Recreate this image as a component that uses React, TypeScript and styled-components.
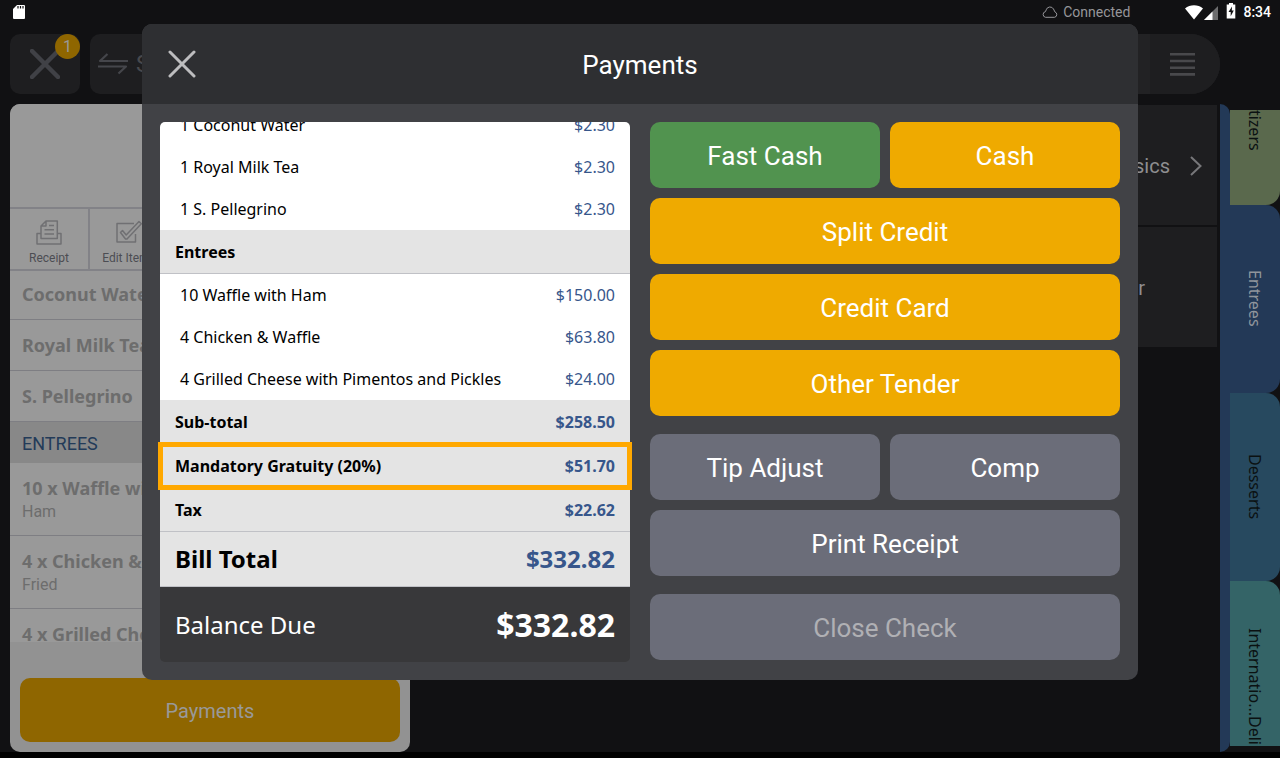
import React from "react";
import styled, { createGlobalStyle } from "styled-components";

const sans = `"Noto Sans", "Open Sans", sans-serif`;
const roboto = `Roboto, "Noto Sans", sans-serif`;

const GlobalStyle = createGlobalStyle`
  * { box-sizing: border-box; }
  body { margin: 0; background: #000; font-family: ${roboto}; }
  button { border: 0; padding: 0; background: none; color: inherit; font: inherit; cursor: pointer; }
  h1, h2, ul { margin: 0; padding: 0; font: inherit; list-style: none; }
`;

const Screen = styled.div`
  position: relative;
  display: flex;
  flex-direction: column;
  height: 100vh;
  min-height: 700px;
  overflow: hidden;
  background: #111113;
  border-bottom: 6px solid #000;
`;

const StatusBar = styled.header`
  display: flex;
  align-items: center;
  height: 24px;
  padding: 0 9px 0 12px;
  color: #fff;
`;

const Connection = styled.span`
  display: flex;
  align-items: center;
  gap: 5px;
  margin-left: auto;
  margin-right: 55px;
  color: #96969a;
  font-size: 14px;
`;

const SystemIcons = styled.span`
  display: flex;
  align-items: center;
  font-size: 14px;
  font-weight: 500;
`;

const Clock = styled.time`
  margin-left: 7px;
`;

const Toolbar = styled.nav`
  display: flex;
  gap: 10px;
  padding: 10px 60px 10px 10px;
`;

const ToolButton = styled.button<{ $grow?: boolean }>`
  position: relative;
  display: flex;
  align-items: center;
  justify-content: ${(p) => (p.$grow ? "flex-start" : "center")};
  gap: 8px;
  flex: ${(p) => (p.$grow ? "0 0 200px" : "0 0 70px")};
  height: 60px;
  padding-left: ${(p) => (p.$grow ? "8px" : "0")};
  border-radius: 10px;
  background: #1e1e20;
  color: #48494d;
  font-size: 24px;
`;

const Badge = styled.span`
  position: absolute;
  top: 0;
  right: 0;
  width: 25px;
  height: 25px;
  border-radius: 50%;
  background: #8f6600;
  color: #999;
  font-size: 16px;
  line-height: 25px;
  text-align: center;
`;

const ToolStrip = styled.div`
  display: flex;
  flex: 1;
  justify-content: flex-end;
  border-radius: 30px;
  background: #222224;
  overflow: hidden;
`;

const MenuButton = styled.button`
  display: flex;
  align-items: center;
  justify-content: center;
  width: 70px;
  padding-right: 6px;
  background: #1e1e20;
`;

const Main = styled.main`
  display: flex;
  flex: 1;
  min-height: 0;
  padding-left: 10px;
`;

const OrderPanel = styled.section`
  display: flex;
  flex-direction: column;
  flex: 0 0 400px;
  border-radius: 10px;
  background: #929292;
  overflow: hidden;
`;

const OrderHead = styled.div`
  flex: 0 0 103px;
  background: #999;
`;

const OrderActions = styled.div`
  display: grid;
  grid-template-columns: repeat(5, 1fr);
  flex: 0 0 64px;
  border: solid #828287;
  border-width: 2px 0;
  background: #999;
`;

const OrderAction = styled.button`
  display: flex;
  flex-direction: column;
  align-items: center;
  justify-content: flex-end;
  gap: 6px;
  padding-bottom: 4px;
  border-right: 2px solid #828287;
  color: #4c4d53;
  font-size: 12px;
  line-height: 14px;
  white-space: nowrap;
`;

const OrderWindow = styled.div`
  flex: 1;
  min-height: 0;
  margin-bottom: 36px;
  overflow: hidden;
`;

const OrderList = styled.ul`
  && { margin-top: -2px; }
`;

const OrderItem = styled.li<{ $tall?: boolean }>`
  display: flex;
  flex-direction: column;
  justify-content: center;
  height: ${(p) => (p.$tall ? "73px" : "51px")};
  padding: ${(p) => (p.$tall ? "2px 12px 0" : "0 12px 1px")};
  border-bottom: 1px solid #7e7e83;
  background: #999;
  color: #6d6d6d;
  font: 700 18px/24px ${sans};
  white-space: nowrap;
`;

const Modifier = styled.span`
  font: 400 16px/24px ${roboto};
`;

const OrderSection = styled.li`
  height: 41px;
  padding-left: 12px;
  background: #888;
  color: #233b59;
  font-size: 18px;
  line-height: 43px;
`;

const PayButton = styled.button`
  flex: 0 0 64px;
  margin: 0 10px 10px;
  padding-top: 2px;
  border-radius: 10px;
  background: #8f6600;
  color: #999;
  font-size: 20px;
`;

const MenuGrid = styled.section`
  display: grid;
  flex: 1;
  grid-template-columns: 1fr 1fr 1fr;
  grid-auto-rows: 120px;
  gap: 2px;
  padding: 1px 3px 0 10px;
`;

const MenuTile = styled.button<{ $inset: number }>`
  display: flex;
  grid-column: 3;
  align-items: center;
  justify-content: flex-end;
  gap: 20px;
  padding-top: 1px;
  padding-right: ${(p) => p.$inset}px;
  background: #1e1e20;
  color: #8e8e90;
  font-size: 20px;
`;

const Rail = styled.aside`
  display: flex;
  flex: 0 0 60px;
`;

const RailEdge = styled.div`
  flex: 0 0 10px;
  border-radius: 0 10px 10px 0;
  background: #233957;
`;

const TabWindow = styled.div`
  flex: 1;
  margin: 6px 0;
  overflow: hidden;
`;

const TabList = styled.div`
  display: flex;
  flex-direction: column;
  margin-top: -93px;
`;

const Tab = styled.button<{ $bg: string; $active?: boolean }>`
  display: flex;
  align-items: center;
  justify-content: center;
  flex: 0 0 auto;
  min-height: 188px;
  padding: 47px 0 48px;
  border-radius: 0 14px 14px 0;
  background: ${(p) => p.$bg};
  color: ${(p) => (p.$active ? "#90959c" : "#0b1112")};
  font: 400 16px/22px ${sans};
  writing-mode: vertical-rl;
  white-space: nowrap;
`;

const Overlay = styled.div`
  position: absolute;
  inset: 24px 0 0;
  display: flex;
  align-items: flex-start;
  justify-content: center;
`;

const Dialog = styled.section`
  width: 100%;
  max-width: 996px;
  border-radius: 10px;
  background: #414246;
  overflow: hidden;
`;

const DialogHeader = styled.header`
  display: grid;
  grid-template-columns: 80px 1fr 80px;
  align-items: center;
  height: 80px;
  background: #2e2f32;
`;

const DialogTitle = styled.h1`
  && { padding-top: 2px; }
  color: #fff;
  font-size: 26px;
  line-height: 32px;
  text-align: center;
`;

const CloseButton = styled.button`
  display: flex;
  justify-content: center;
`;

const DialogBody = styled.div`
  display: grid;
  grid-template-columns: 1fr 1fr;
  gap: 20px;
  padding: 18px;
`;

const Receipt = styled.div`
  display: flex;
  flex-direction: column;
  height: 540px;
`;

const ReceiptItems = styled.div`
  display: flex;
  flex: 1;
  flex-direction: column;
  justify-content: flex-end;
  min-height: 0;
  border-radius: 5px 5px 0 0;
  background: #fff;
  overflow: hidden;
`;

const ReceiptTable = styled.table`
  width: 100%;
  border-spacing: 0;
  font: 400 16px/22px ${sans};
  color: #000;

  th, td { padding: 0 15px; }
  th { text-align: left; font-weight: inherit; }
  td { color: #37568b; text-align: right; }
`;

const ItemRow = styled.tr`
  height: 42px;
  th { padding-left: 20px; }
`;

const TotalRow = styled.tr<{ $line?: boolean; $marked?: boolean }>`
  height: 44px;
  background: #e4e4e4;
  font-weight: 700;
  outline: ${(p) => (p.$marked ? "5px solid #ffa800" : "none")};
  outline-offset: -3px;
  th, td { border-bottom: ${(p) => (p.$line ? "1px solid #c0c1c6" : "0")}; }
`;

const BillRow = styled(TotalRow)`
  height: 55px;
  font-size: 24px;
`;

const Balance = styled.div`
  display: flex;
  align-items: center;
  justify-content: space-between;
  height: 75px;
  padding: 0 15px;
  border-radius: 0 0 5px 5px;
  background: #38383a;
  color: #fff;
  font: 400 24px/32px ${sans};
`;

const BalanceAmount = styled.strong`
  font-size: 32px;
`;

const Actions = styled.div`
  display: flex;
  flex-direction: column;
  gap: 18px;
`;

const ActionGroup = styled.div`
  display: grid;
  grid-template-columns: 1fr 1fr;
  gap: 10px;
`;

const tones = { green: "#51934f", amber: "#efaa00", grey: "#6b6d79" };

const ActionButton = styled.button<{ $tone: keyof typeof tones; $wide?: boolean }>`
  grid-column: ${(p) => (p.$wide ? "1 / -1" : "auto")};
  height: 66px;
  padding-top: 2px;
  border-radius: 10px;
  background: ${(p) => tones[p.$tone]};
  color: #fff;
  font-size: 26px;

  &:disabled { color: #b0b0b4; cursor: default; }
`;

const drinks = [
  ["1 Coconut Water", "$2.30"],
  ["1 Royal Milk Tea", "$2.30"],
  ["1 S. Pellegrino", "$2.30"],
];
const entrees = [
  ["10 Waffle with Ham", "$150.00"],
  ["4 Chicken & Waffle", "$63.80"],
  ["4 Grilled Cheese with Pimentos and Pickles", "$24.00"],
];

const Lines = ({ rows }: { rows: string[][] }) => (
  <>
    {rows.map(([name, price]) => (
      <ItemRow key={name}>
        <th scope="row">{name}</th>
        <td>{price}</td>
      </ItemRow>
    ))}
  </>
);

const SdCard = () => (
  <svg width="14" height="16" viewBox="0 0 14 16" aria-hidden="true">
    <path d="M5 1h7a1 1 0 0 1 1 1v12a1 1 0 0 1-1 1H2a1 1 0 0 1-1-1V5z" fill="#fff" />
    <path d="M6 2v2.500M8.500 2v2.500M11 2v2.500" stroke="#111113" strokeWidth="1.200" />
  </svg>
);

const Cloud = () => (
  <svg width="16" height="12" viewBox="0 0 16 12" fill="none" stroke="#96969a" aria-hidden="true">
    <path d="M3.500 11.300h9a2.800 2.800 0 0 0 .4-5.400L11.500 3A4 4 0 0 0 4.200 3.800L3.500 5.600a2.900 2.900 0 0 0 0 5.700z" strokeLinejoin="round" />
  </svg>
);

const Wifi = () => (
  <svg width="18" height="15" viewBox="0 0 18 15" aria-hidden="true">
    <path d="M0 3.500C5-.8 13-.8 18 3.500L9 14.500z" fill="#fff" />
  </svg>
);

const Signal = () => (
  <svg width="16" height="15" viewBox="0 0 16 15" aria-hidden="true">
    <path d="M1 15L15 1v14z" fill="#6d6d6e" />
    <path d="M1 15L9.500 6.500V15z" fill="#fff" />
  </svg>
);

const BatteryGlyph = styled.svg`
  margin: 0 0 2px 7px;
`;

const Battery = () => (
  <BatteryGlyph width="10" height="16" viewBox="0 0 10 16" aria-hidden="true">
    <path d="M3 0h4v1.500h2.300v14H.7v-14H3z" fill="#fff" />
    <path d="M6 3.500L2.500 9h2.200v4.200L7.800 7.600H5.800z" fill="#111113" />
  </BatteryGlyph>
);

const Cross = ({ size, color, weight }: { size: number; color: string; weight: number }) => (
  <svg width={size} height={size} viewBox={`0 0 ${size} ${size}`} stroke={color} strokeWidth={weight} strokeLinecap="round" aria-hidden="true">
    <path d={`M2 2L${size - 2} ${size - 2}M${size - 2} 2L2 ${size - 2}`} />
  </svg>
);

const Swap = () => (
  <svg width="30" height="22" viewBox="0 0 30 22" fill="none" stroke="#45464b" strokeWidth="2.200" strokeLinejoin="round" aria-hidden="true">
    <path d="M30 8H2L9.500 1M0 13.500h28L20.500 20.500" />
  </svg>
);

const Bars = () => (
  <svg width="25" height="24" viewBox="0 0 25 24" stroke="#49494c" strokeWidth="2.600" aria-hidden="true">
    <path d="M0 2.300h25M0 9h25M0 15.700h25M0 22.400h25" />
  </svg>
);

const Chevron = () => (
  <svg width="12" height="20" viewBox="0 0 12 20" fill="none" stroke="#77777a" strokeWidth="2" aria-hidden="true">
    <path d="M1 1l9.500 9L1 19" />
  </svg>
);

const ReceiptIcon = () => (
  <svg width="26" height="25" viewBox="0 0 26 25" fill="none" stroke="#707073" strokeWidth="1.500" strokeLinejoin="round" aria-hidden="true">
    <path d="M5 13.500H1V24h24V13.500h-4" />
    <path d="M10 1h11.300v17.500H5V6zM10 1v5H5M13 5.500h5M8.500 9.800H18M8.500 14H18" />
  </svg>
);

const EditIcon = () => (
  <svg width="26" height="25" viewBox="0 0 26 25" fill="none" stroke="#707073" strokeWidth="1.500" strokeLinejoin="round" aria-hidden="true">
    <path d="M18 3.500H1v18.500h18.500v-8" />
    <path d="M23 1.500L25.300 3.800 11 19H9.500L4.500 12.500l2-2 3.700 4.500z" />
  </svg>
);

export default function App() {
  return (
    <>
      <GlobalStyle />
      <Screen>
        <StatusBar>
          <SdCard />
          <Connection><Cloud />Connected</Connection>
          <SystemIcons>
            <Wifi /><Signal /><Battery />
            <Clock>8:34</Clock>
          </SystemIcons>
        </StatusBar>

        <Toolbar>
          <ToolButton aria-label="Clear order">
            <Cross size={30} color="#404146" weight={4.5} />
            <Badge>1</Badge>
          </ToolButton>
          <ToolButton $grow><Swap />S</ToolButton>
          <ToolStrip>
            <MenuButton aria-label="Menu"><Bars /></MenuButton>
          </ToolStrip>
        </Toolbar>

        <Main>
          <OrderPanel>
            <OrderHead />
            <OrderActions>
              <OrderAction><ReceiptIcon />Receipt</OrderAction>
              <OrderAction><EditIcon />Edit Items</OrderAction>
            </OrderActions>
            <OrderWindow>
              <OrderList>
                <OrderItem>Coconut Water</OrderItem>
                <OrderItem>Royal Milk Tea</OrderItem>
                <OrderItem>S. Pellegrino</OrderItem>
                <OrderSection>ENTREES</OrderSection>
                <OrderItem $tall>10 x Waffle with<Modifier>Ham</Modifier></OrderItem>
                <OrderItem $tall>4 x Chicken &amp;<Modifier>Fried</Modifier></OrderItem>
                <OrderItem>4 x Grilled Cheese</OrderItem>
              </OrderList>
            </OrderWindow>
            <PayButton>Payments</PayButton>
          </OrderPanel>

          <MenuGrid>
            <MenuTile $inset={15}>Classics<Chevron /></MenuTile>
            <MenuTile $inset={72}>Burger</MenuTile>
          </MenuGrid>

          <Rail>
            <RailEdge />
            <TabWindow>
              <TabList>
                <Tab $bg="#5a694d">Appetizers</Tab>
                <Tab $bg="#233957" $active>Entrees</Tab>
                <Tab $bg="#27495f">Desserts</Tab>
                <Tab $bg="#346467">Internatio...Delights</Tab>
              </TabList>
            </TabWindow>
          </Rail>
        </Main>

        <Overlay>
          <Dialog role="dialog" aria-labelledby="dialog-title">
            <DialogHeader>
              <CloseButton aria-label="Close"><Cross size={28} color="#bdbdbf" weight={3} /></CloseButton>
              <DialogTitle id="dialog-title">Payments</DialogTitle>
            </DialogHeader>
            <DialogBody>
              <Receipt>
                <ReceiptItems>
                  <ReceiptTable>
                    <tbody>
                      <Lines rows={drinks} />
                      <TotalRow $line><th colSpan={2} scope="colgroup">Entrees</th></TotalRow>
                      <Lines rows={entrees} />
                    </tbody>
                  </ReceiptTable>
                </ReceiptItems>
                <ReceiptTable>
                  <tbody>
                    <TotalRow><th scope="row">Sub-total</th><td>$258.50</td></TotalRow>
                    <TotalRow $marked><th scope="row">Mandatory Gratuity (20%)</th><td>$51.70</td></TotalRow>
                    <TotalRow $line><th scope="row">Tax</th><td>$22.62</td></TotalRow>
                    <BillRow $line><th scope="row">Bill Total</th><td>$332.82</td></BillRow>
                  </tbody>
                </ReceiptTable>
                <Balance>Balance Due<BalanceAmount>$332.82</BalanceAmount></Balance>
              </Receipt>
              <Actions>
                <ActionGroup>
                  <ActionButton $tone="green">Fast Cash</ActionButton>
                  <ActionButton $tone="amber">Cash</ActionButton>
                  <ActionButton $tone="amber" $wide>Split Credit</ActionButton>
                  <ActionButton $tone="amber" $wide>Credit Card</ActionButton>
                  <ActionButton $tone="amber" $wide>Other Tender</ActionButton>
                </ActionGroup>
                <ActionGroup>
                  <ActionButton $tone="grey">Tip Adjust</ActionButton>
                  <ActionButton $tone="grey">Comp</ActionButton>
                  <ActionButton $tone="grey" $wide>Print Receipt</ActionButton>
                </ActionGroup>
                <ActionButton $tone="grey" disabled>Close Check</ActionButton>
              </Actions>
            </DialogBody>
          </Dialog>
        </Overlay>
      </Screen>
    </>
  );
}
